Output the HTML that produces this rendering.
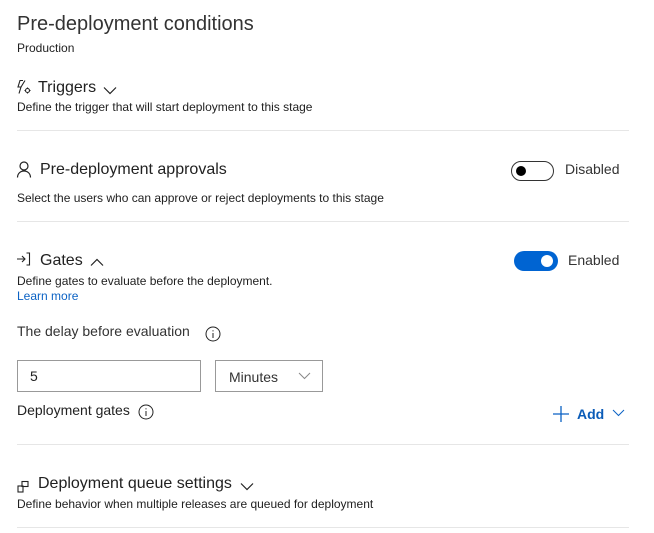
<!DOCTYPE html>
<html><head><meta charset="utf-8"><style>
*{margin:0;padding:0;box-sizing:border-box}
body{width:654px;height:533px;background:#fff;font-family:"Liberation Sans",sans-serif;color:#212121;position:relative;overflow:hidden}
.a{position:absolute;white-space:nowrap}
.h{font-size:16px;line-height:20px}
.s{font-size:12px;line-height:14px}
.line{position:absolute;left:17px;width:612px;height:1px;background:#e6e6e6}
svg{position:absolute}
</style></head><body>
<div class="a" style="left:17px;top:12px;font-size:20px;line-height:24px;color:#333">Pre-deployment conditions</div>
<div class="a s" style="left:17px;top:41px">Production</div>

<svg style="left:16px;top:79px" width="16" height="16" viewBox="0 0 16 16" fill="none" stroke="#222" stroke-width="1.1"><path d="M7 1.5H4L2 8h3l-2 6.5M5 8l4-6.5"/><circle cx="11.5" cy="11.5" r="2"/><path d="M11.5 8.5v1M11.5 13.5v1M8.5 11.5h1M13.5 11.5h1"/></svg>
<div class="a h" style="left:38px;top:78px">Triggers</div>
<svg style="left:103px;top:86px" width="14" height="9" viewBox="0 0 14 9" fill="none" stroke="#222" stroke-width="1.2"><path d="M1 1.5l6 6 6-6"/></svg>
<div class="a s" style="left:17px;top:100px">Define the trigger that will start deployment to this stage</div>
<div class="line" style="top:130px"></div>

<svg style="left:16px;top:161px" width="16" height="17" viewBox="0 0 16 17" fill="none" stroke="#222" stroke-width="1.2"><circle cx="8" cy="5" r="4"/><path d="M1.5 16.5c0-4 3-6.5 6.5-6.5s6.5 2.5 6.5 6.5"/></svg>
<div class="a h" style="left:40px;top:160px">Pre-deployment approvals</div>
<div class="a" style="left:511px;top:161px;width:43px;height:20px;border:1px solid #333;border-radius:10px"><div style="position:absolute;left:4px;top:4px;width:10px;height:10px;border-radius:50%;background:#000"></div></div>
<div class="a" style="left:565px;top:161px;font-size:14px;line-height:16px;color:#333">Disabled</div>
<div class="a s" style="left:17px;top:191px">Select the users who can approve or reject deployments to this stage</div>
<div class="line" style="top:221px"></div>

<svg style="left:16px;top:252px" width="15" height="14" viewBox="0 0 15 14" fill="none" stroke="#222" stroke-width="1.1"><path d="M1 7h8M6 4l3 3-3 3M10.5 1h3v12h-3"/></svg>
<div class="a h" style="left:40px;top:251px">Gates</div>
<svg style="left:90px;top:258px" width="14" height="9" viewBox="0 0 14 9" fill="none" stroke="#222" stroke-width="1.2"><path d="M1 7.5l6-6 6 6"/></svg>
<div class="a" style="left:514px;top:251px;width:44px;height:20px;border-radius:10px;background:#0064d2"><div style="position:absolute;right:5px;top:4px;width:12px;height:12px;border-radius:50%;background:#fff"></div></div>
<div class="a" style="left:568px;top:252px;font-size:14px;line-height:16px;color:#333">Enabled</div>
<div class="a s" style="left:17px;top:274px">Define gates to evaluate before the deployment.</div>
<div class="a s" style="left:17px;top:289px;color:#0b62c4">Learn more</div>

<div class="a" style="left:17px;top:323px;font-size:14px;line-height:16px;color:#333">The delay before evaluation</div>
<svg style="left:205px;top:326px" width="16" height="16" viewBox="0 0 16 16" fill="none" stroke="#222" stroke-width="1"><circle cx="8" cy="8" r="7"/><path d="M8 7v5M8 4.2v1.2"/></svg>
<div class="a" style="left:17px;top:360px;width:184px;height:32px;border:1px solid #999"><span style="position:absolute;left:12px;top:7px;font-size:14px">5</span></div>
<div class="a" style="left:215px;top:360px;width:108px;height:32px;border:1px solid #999"><span style="position:absolute;left:13px;top:8px;font-size:14px;color:#333">Minutes</span></div>
<svg style="left:298px;top:372px" width="13" height="8" viewBox="0 0 13 8" fill="none" stroke="#888" stroke-width="1"><path d="M1 1l5.5 5.5L12 1"/></svg>

<div class="a" style="left:17px;top:402px;font-size:14px;line-height:16px;color:#222">Deployment gates</div>
<svg style="left:138px;top:404px" width="16" height="16" viewBox="0 0 16 16" fill="none" stroke="#222" stroke-width="1"><circle cx="8" cy="8" r="7"/><path d="M8 7v5M8 4.2v1.2"/></svg>
<svg style="left:553px;top:406px" width="16" height="16" viewBox="0 0 16 16" fill="none" stroke="#0b62c4" stroke-width="1.3"><path d="M8 0v16M0 8h16"/></svg>
<div class="a" style="left:577px;top:406px;font-size:14px;line-height:16px;font-weight:bold;color:#0b5cb8">Add</div>
<svg style="left:612px;top:409px" width="13" height="8" viewBox="0 0 13 8" fill="none" stroke="#0b62c4" stroke-width="1"><path d="M1 1l5.5 5.5L12 1"/></svg>
<div class="line" style="top:444px"></div>

<svg style="left:17px;top:480px" width="13" height="13" viewBox="0 0 13 13" fill="none" stroke="#222" stroke-width="1.1"><rect x="1" y="6" width="5" height="6"/><rect x="5" y="1.5" width="6" height="5"/></svg>
<div class="a h" style="left:38px;top:474px">Deployment queue settings</div>
<svg style="left:240px;top:482px" width="14" height="9" viewBox="0 0 14 9" fill="none" stroke="#222" stroke-width="1.2"><path d="M1 1.5l6 6 6-6"/></svg>
<div class="a s" style="left:17px;top:497px">Define behavior when multiple releases are queued for deployment</div>
<div class="line" style="top:527px"></div>
</body></html>
